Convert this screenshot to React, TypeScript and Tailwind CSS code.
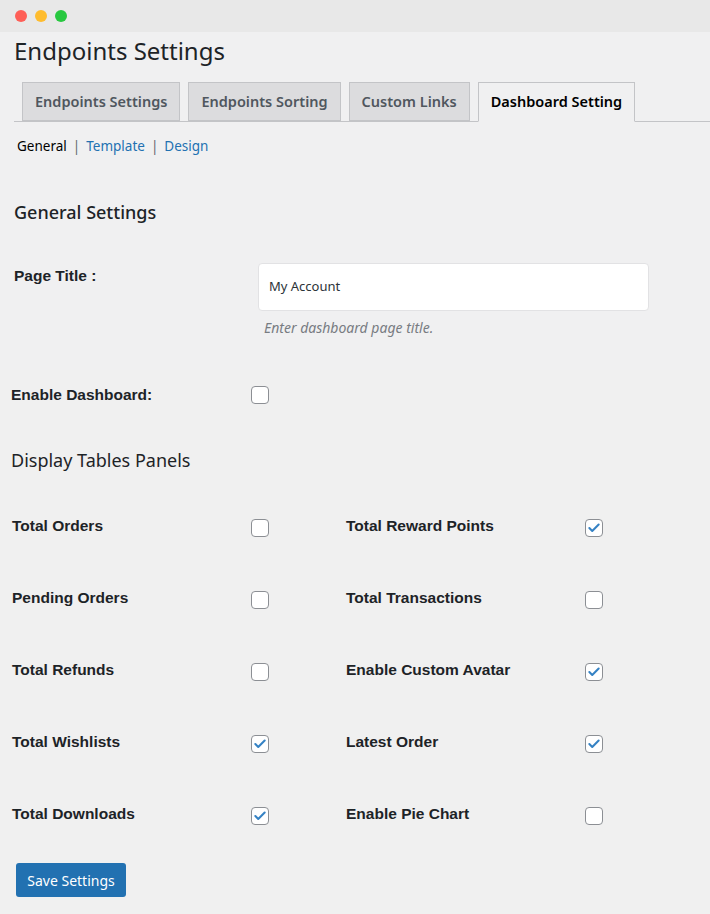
import { Check } from "lucide-react";

const panels: [string, boolean, string, boolean][] = [
  ["Total Orders", false, "Total Reward Points", true],
  ["Pending Orders", false, "Total Transactions", false],
  ["Total Refunds", false, "Enable Custom Avatar", true],
  ["Total Wishlists", true, "Latest Order", true],
  ["Total Downloads", true, "Enable Pie Chart", false],
];

function Box({ checked }: { checked: boolean }) {
  return (
    <span className="flex h-[18px] w-[18px] items-center justify-center rounded-[4px] border border-[#8c8f94] bg-white">
      {checked && <Check className="h-[14px] w-[14px] text-[#3582c4]" strokeWidth={3.5} />}
    </span>
  );
}

const tabs = ["Endpoints Settings", "Endpoints Sorting", "Custom Links", "Dashboard Setting"];

export default function App() {
  return (
    <div className="min-h-[914px] w-[710px] bg-[#f0f0f0] font-['Noto_Sans',sans-serif] text-[#1d2327]">
      <div className="flex h-8 items-center gap-[8px] bg-[#e8e8e8] pl-[15px]">
        <span className="h-3 w-3 rounded-full bg-[#fe5f57]" />
        <span className="h-3 w-3 rounded-full bg-[#febc2e]" />
        <span className="h-3 w-3 rounded-full bg-[#28c840]" />
      </div>

      <div className="bg-[#f0f0f1] pb-[32px]">
        <h1 className="pl-[14px] pt-[3px] text-[24px] leading-[32px]">Endpoints Settings</h1>

        <div className="ml-[14px] mt-[15px] flex gap-2 border-b border-[#c3c4c7] pl-2">
          {tabs.map((t, i) => {
            const active = i === 3;
            return (
              <div
                key={t}
                className={
                  active
                    ? "-mb-px flex h-[40px] items-center border border-b-[#f0f0f1] border-[#c3c4c7] bg-[#f0f0f1] px-3 text-[14.5px] font-semibold text-black"
                    : "-mb-px flex h-[39px] items-center border border-[#c3c4c7] bg-[#dcdcde] px-3 text-[14.5px] font-semibold text-[#50575e]"
                }
              >
                {t}
              </div>
            );
          })}
        </div>

        <div className="mt-[14px] pl-[17px] text-[13.5px] leading-5">
          <span className="text-black">General</span>
          <span className="px-[6px] text-[#646970]">|</span>
          <span className="text-[#2271b1]">Template</span>
          <span className="px-[6px] text-[#646970]">|</span>
          <span className="text-[#2271b1]">Design</span>
        </div>

        <h2 className="mt-[44px] pl-[14px] text-[18px] font-medium leading-6">General Settings</h2>

        <div className="mt-[39px] flex pl-[14px]">
          <div className="w-[244px] pt-[1px] font-['Liberation_Sans',sans-serif] text-[15.5px] font-bold">Page Title :</div>
          <div>
            <div className="flex h-[48px] w-[391px] items-center rounded-[4px] border border-[#e2e2e4] bg-white px-[10px] text-[13px] text-[#2c3338]">
              My Account
            </div>
            <p className="mt-[6px] pl-[6px] text-[14px] italic text-[#787c82]">Enter dashboard page title.</p>
          </div>
        </div>
      </div>

      <div className="font-['Liberation_Sans',sans-serif] text-[#1d2327]">
        <div className="mt-[13px] flex items-center pl-[11px]">
          <span className="w-[240px] text-[15.5px] font-bold">Enable Dashboard:</span>
          <Box checked={false} />
        </div>

        <h3 className="mt-[42px] pl-[11px] font-['Noto_Sans',sans-serif] text-[18px] leading-6">Display Tables Panels</h3>

        <div className="mt-[46px] flex flex-col gap-[54px] pl-[12px]">
          {panels.map(([a, ac, b, bc]) => (
            <div key={a} className="grid h-[18px] grid-cols-[239px_95px_239px_18px] items-center">
              <span className="-mt-[4px] text-[15.5px] font-bold">{a}</span>
              <Box checked={ac} />
              <span className="-mt-[4px] text-[15.5px] font-bold">{b}</span>
              <Box checked={bc} />
            </div>
          ))}
        </div>

        <button className="ml-[16px] mt-[39px] h-[34px] w-[110px] rounded-[3px] bg-[#2271b1] font-['Noto_Sans',sans-serif] text-[14px] text-white">
          Save Settings
        </button>
      </div>
    </div>
  );
}
